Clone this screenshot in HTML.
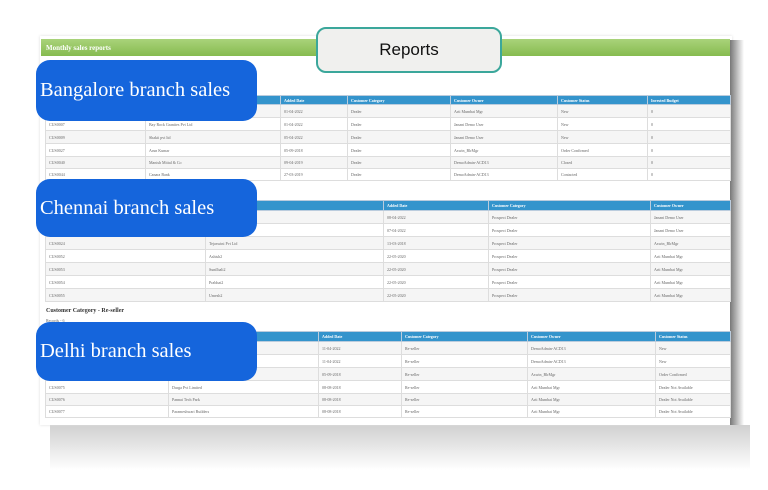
<!DOCTYPE html>
<html><head><meta charset="utf-8"><style>
*{margin:0;padding:0;box-sizing:border-box}
body{width:768px;height:490px;background:#fff;position:relative;overflow:hidden;font-family:"Liberation Serif",serif}
.abs{position:absolute}
.shot{left:40px;top:36px;width:692px;height:389px;background:#fff;box-shadow:0 0 3px #ddd}
.rshade{left:730px;top:40px;width:14px;height:385px;background:linear-gradient(90deg,#777,#bbb 50%,#fff)}
.bshade{left:50px;top:425px;width:700px;height:45px;background:linear-gradient(180deg,#d0d0d0,#ececec 60%,#fff);}
.green{left:41px;top:39px;width:689px;height:17px;background:linear-gradient(180deg,#a9d37a,#86bb4f);color:#fff;font-size:7px;font-weight:bold;padding:5px 5px}
table{position:absolute;border-collapse:collapse;font-size:4px;color:#666;table-layout:fixed}
th{background:#3494cc;color:#fff;text-align:left;font-weight:bold;padding:0 3px;border:1px solid #bcd}
td{border:1px solid #ddd;padding:0 3px;white-space:nowrap;overflow:hidden}
tr:nth-child(even) td{background:#f5f5f5}
.lab{background:#1565dc;border-radius:14px;color:#fff;font-size:20.5px;padding-left:4px;display:flex;align-items:center;left:36px;width:221px}
.rep{left:316px;top:27px;width:186px;height:46px;border:2px solid #3ba79b;border-radius:10px;background:#f0f0ee;font-family:"Liberation Sans",sans-serif;font-size:17px;display:flex;align-items:center;justify-content:center;color:#111}
</style></head><body>
<div class="abs bshade"></div>
<div class="abs shot"></div>
<div class="abs rshade"></div>
<div class="abs green">Monthly sales reports</div>
<div class="abs" style="left:44px;top:61px;font-size:4px;color:#777">Report includes Birla, Ganesh, Report, Ace Tiles, Sunshine Dealers, Ashok Prime Support Only, Ashe ACD, Bhavani ...</div>

<table style="left:45px;top:95px;width:685px">
<colgroup><col style="width:100px"><col style="width:135px"><col style="width:67px"><col style="width:103px"><col style="width:107px"><col style="width:90px"><col style="width:83px"></colgroup>
<tr style="height:9px"><th></th><th></th><th>Added Date</th><th>Customer Category</th><th>Customer Owner</th><th>Customer Status</th><th>Invested Budget</th></tr>
<tr style="height:13px"><td>CUS0001</td><td>Birla</td><td>01-04-2022</td><td>Dealer</td><td>Arti Mumbai Mgr</td><td>New</td><td>0</td></tr>
<tr style="height:13px"><td>CUS0007</td><td>Bay Rock Granites Pvt Ltd</td><td>01-04-2022</td><td>Dealer</td><td>Janani Demo User</td><td>New</td><td>0</td></tr>
<tr style="height:13px"><td>CUS0009</td><td>Shakti pvt ltd</td><td>05-04-2022</td><td>Dealer</td><td>Janani Demo User</td><td>New</td><td>0</td></tr>
<tr style="height:13px"><td>CUS0027</td><td>Arun Kumar</td><td>05-09-2018</td><td>Dealer</td><td>Aswin_BlrMgr</td><td>Order Confirmed</td><td>0</td></tr>
<tr style="height:12px"><td>CUS0040</td><td>Manish Mittal &amp; Co</td><td>09-04-2019</td><td>Dealer</td><td>DemoAdmin-ACD13</td><td>Closed</td><td>0</td></tr>
<tr style="height:12px"><td>CUS0044</td><td>Canara Bank</td><td>27-03-2019</td><td>Dealer</td><td>DemoAdmin-ACD13</td><td>Contacted</td><td>0</td></tr>
</table>

<table style="left:45px;top:200px;width:685px">
<colgroup><col style="width:160px"><col style="width:178px"><col style="width:105px"><col style="width:162px"><col style="width:80px"></colgroup>
<tr style="height:10px"><th></th><th></th><th>Added Date</th><th>Customer Category</th><th>Customer Owner</th></tr>
<tr style="height:13px"><td></td><td></td><td>08-04-2022</td><td>Prospect Dealer</td><td>Janani Demo User</td></tr>
<tr style="height:13px"><td></td><td></td><td>07-04-2022</td><td>Prospect Dealer</td><td>Janani Demo User</td></tr>
<tr style="height:13px"><td>CUS0024</td><td>Tejaswini Pvt Ltd</td><td>13-03-2018</td><td>Prospect Dealer</td><td>Aswin_BlrMgr</td></tr>
<tr style="height:13px"><td>CUS0052</td><td>Ashish2</td><td>22-05-2020</td><td>Prospect Dealer</td><td>Arti Mumbai Mgr</td></tr>
<tr style="height:13px"><td>CUS0053</td><td>Sunilbali2</td><td>22-05-2020</td><td>Prospect Dealer</td><td>Arti Mumbai Mgr</td></tr>
<tr style="height:13px"><td>CUS0054</td><td>Prabhat2</td><td>22-05-2020</td><td>Prospect Dealer</td><td>Arti Mumbai Mgr</td></tr>
<tr style="height:13px"><td>CUS0055</td><td>Umesh2</td><td>22-05-2020</td><td>Prospect Dealer</td><td>Arti Mumbai Mgr</td></tr>
</table>
<div class="abs" style="left:46px;top:308px;font-size:6px;color:#333;font-weight:bold">Customer Category - Re-seller</div>
<div class="abs" style="left:46px;top:318px;font-size:4px;color:#666">Records - 6</div>

<table style="left:45px;top:331px;width:685px">
<colgroup><col style="width:123px"><col style="width:150px"><col style="width:83px"><col style="width:126px"><col style="width:128px"><col style="width:75px"></colgroup>
<tr style="height:10px"><th></th><th></th><th>Added Date</th><th>Customer Category</th><th>Customer Owner</th><th>Customer Status</th></tr>
<tr style="height:13px"><td></td><td></td><td>11-04-2022</td><td>Re-seller</td><td>DemoAdmin-ACD13</td><td>New</td></tr>
<tr style="height:13px"><td></td><td></td><td>11-04-2022</td><td>Re-seller</td><td>DemoAdmin-ACD13</td><td>New</td></tr>
<tr style="height:13px"><td></td><td></td><td>05-09-2018</td><td>Re-seller</td><td>Aswin_BlrMgr</td><td>Order Confirmed</td></tr>
<tr style="height:13px"><td>CUS0075</td><td>Durga Pvt Limited</td><td>08-08-2018</td><td>Re-seller</td><td>Arti Mumbai Mgr</td><td>Dealer Not Available</td></tr>
<tr style="height:12px"><td>CUS0076</td><td>Pannai Tech Park</td><td>08-08-2018</td><td>Re-seller</td><td>Arti Mumbai Mgr</td><td>Dealer Not Available</td></tr>
<tr style="height:12px"><td>CUS0077</td><td>Parameshwari Builders</td><td>08-08-2018</td><td>Re-seller</td><td>Arti Mumbai Mgr</td><td>Dealer Not Available</td></tr>
</table>

<div class="abs lab" style="top:60px;height:61px">Bangalore branch sales</div>
<div class="abs lab" style="top:179px;height:58px">Chennai branch sales</div>
<div class="abs lab" style="top:322px;height:59px">Delhi branch sales</div>
<div class="abs rep">Reports</div>
</body></html>
